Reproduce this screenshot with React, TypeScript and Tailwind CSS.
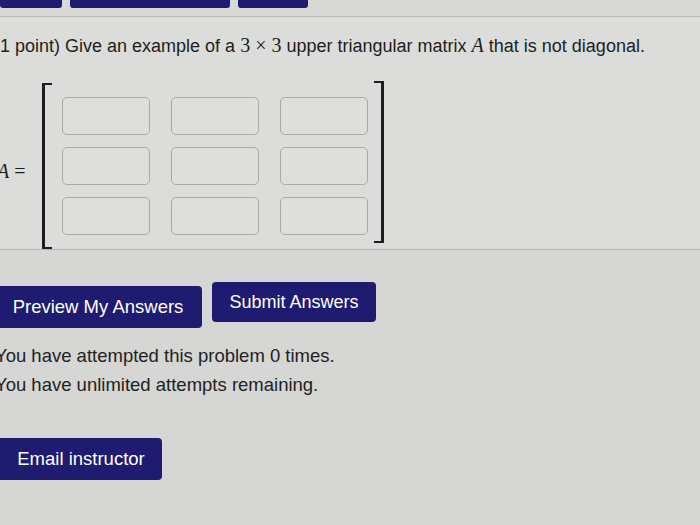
const cells = Array.from({ length: 9 }, (_, i) => i)

export default function App() {
  return (
    <div
      className="h-[525px] w-[700px] overflow-hidden bg-[#d6d6d4] text-[#1e1e1e]"
      style={{ fontFamily: '"Liberation Sans", Arial, sans-serif' }}
    >
      {/* top nav buttons, cut off */}
      <div className="flex h-[17px] items-start gap-[8px] border-b border-[#b9b9b7] bg-[#d9d9d7]">
        <div className="h-[8px] w-[62px] rounded-b-[3px] bg-[#1f1b70]" />
        <div className="h-[8px] w-[160px] rounded-b-[3px] bg-[#1f1b70]" />
        <div className="h-[8px] w-[70px] rounded-b-[3px] bg-[#1f1b70]" />
      </div>

      {/* problem panel */}
      <div className="h-[233px] border-b border-[#b5b5b3] bg-[#dcdcda]">
        <p className="-ml-[6px] whitespace-nowrap pt-[16px] text-[18px] leading-[24px]">
          (1 point) Give an example of a{" "}
          <span style={{ fontFamily: '"Liberation Serif", serif' }} className="text-[20px]">
            3 × 3
          </span>{" "}
          upper triangular matrix{" "}
          <span style={{ fontFamily: '"Liberation Serif", serif' }} className="text-[20px] italic">
            A
          </span>{" "}
          that is not diagonal.
        </p>

        <div className="mt-[25px] flex items-center">
          <span
            className="-ml-[3px] mt-[10px] w-[45px] whitespace-nowrap text-[20px]"
            style={{ fontFamily: '"Liberation Serif", serif' }}
          >
            <i>A</i> =
          </span>
          <div className="h-[166px] w-[10px] self-start border-y-2 border-l-[3px] border-[#1e1e1e]" />
          <div className="grid grid-cols-[88px_88px_88px] gap-x-[21px] gap-y-[12px] pl-[10px] pr-[6px]">
            {cells.map((c) => (
              <div
                key={c}
                className="h-[38px] rounded-[5px] border-[1.5px] border-[#a9a9a7] bg-[#dededc]"
              />
            ))}
          </div>
          <div className="-mt-[2px] h-[162px] w-[10px] self-start border-y-2 border-r-[3px] border-[#1e1e1e]" />
        </div>
      </div>

      {/* actions */}
      <div className="mt-[32px] flex items-start gap-[10px]">
        <button className="mt-[4px] h-[42px] w-[202px] rounded-r-[4px] bg-[#1f1b70] pr-[6px] text-[18.5px] text-white">
          Preview My Answers
        </button>
        <button className="h-[40px] w-[164px] rounded-[4px] bg-[#1f1b70] text-[18px] text-white">
          Submit Answers
        </button>
      </div>

      <div className="-ml-[5px] mt-[13px] whitespace-nowrap text-[18.5px] leading-[29px] text-[#222]">
        <p>You have attempted this problem 0 times.</p>
        <p>You have unlimited attempts remaining.</p>
      </div>

      <button className="mt-[39px] h-[42px] w-[162px] rounded-r-[4px] bg-[#1f1b70] text-[18.5px] text-white">
        Email instructor
      </button>
    </div>
  )
}
